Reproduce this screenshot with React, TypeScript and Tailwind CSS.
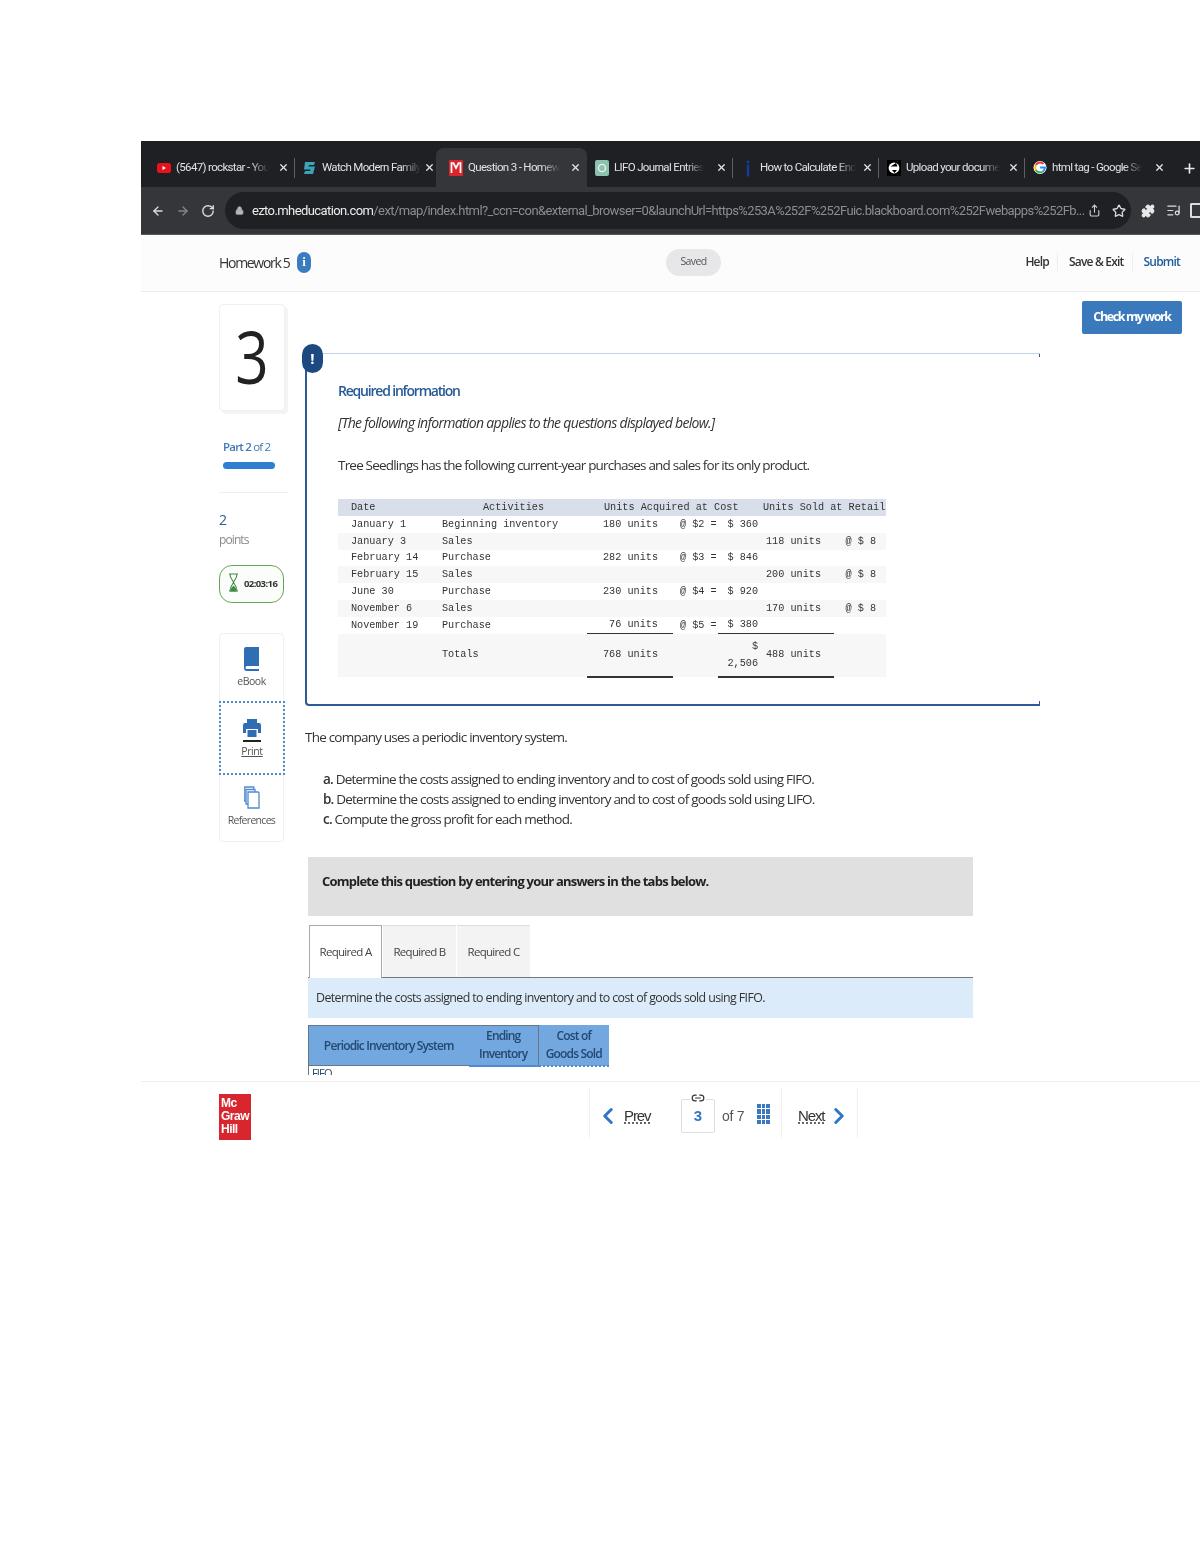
import React from "react";
import { ArrowLeft, ArrowRight, RotateCw, Lock, Share, Star, Puzzle, ListMusic, Link2, ChevronLeft, ChevronRight, X, Plus } from "lucide-react";

const tabs = [
  { t: "(5647) rockstar - You", i: "yt" },
  { t: "Watch Modern Family", i: "s" },
  { t: "Question 3 - Homew", i: "m", active: true },
  { t: "LIFO Journal Entries", i: "gpt" },
  { t: "How to Calculate End", i: "ib" },
  { t: "Upload your docume", i: "up" },
  { t: "html tag - Google Se", i: "g" },
];

function Fav({ k }: { k: string }) {
  if (k === "yt") return <svg width="14" height="14" viewBox="0 0 14 14"><rect y="2" width="14" height="10" rx="2.5" fill="#e8121a" /><path d="M5.5 5v4l3.5-2z" fill="#fff" /></svg>;
  if (k === "s") return <svg width="14" height="14" viewBox="0 0 14 14"><path d="M2 1h10l-1 3H6l-.5 1.5H12L10 13H1l1-3h5l.5-1.5H1z" fill="#3aa5b8" /></svg>;
  if (k === "m") return <svg width="14" height="16" viewBox="0 0 14 16"><rect width="14" height="16" fill="#d9262c" /><path d="M2.5 13V3h2l2.5 5 2.5-5h2v10" fill="none" stroke="#fff" strokeWidth="1.7" /></svg>;
  if (k === "gpt") return <svg width="14" height="16" viewBox="0 0 14 16"><rect width="14" height="16" rx="2" fill="#8cc2ae" /><circle cx="7" cy="8" r="3.6" fill="none" stroke="#e8f5f0" strokeWidth="1.4" /></svg>;
  if (k === "ib") return <svg width="14" height="18" viewBox="0 0 14 18"><circle cx="7" cy="3" r="1.4" fill="#123c9c" /><rect x="5.8" y="5.5" width="2.4" height="12" fill="#123c9c" /></svg>;
  if (k === "up") return <svg width="14" height="16" viewBox="0 0 14 16"><rect width="14" height="16" fill="#000" /><circle cx="7" cy="8" r="5.4" fill="#fff" /><path d="M3.5 6.5h7L9 3zM5 10h5l-2.5 3z" fill="#000" /></svg>;
  return <svg width="15" height="15" viewBox="0 0 15 15"><circle cx="7.5" cy="7.5" r="7" fill="#fff" /><path d="M7.5 2.2a5.3 5.3 0 0 1 3.7 1.5" fill="none" stroke="#e33" strokeWidth="2" /><path d="M3 4.8a5.3 5.3 0 0 1 4.5-2.6" fill="none" stroke="#e33" strokeWidth="2" /><path d="M3 4.8a5.3 5.3 0 0 0 0 5.4" fill="none" stroke="#fb0" strokeWidth="2" /><path d="M3 10.2a5.3 5.3 0 0 0 7.5 1.6" fill="none" stroke="#3a5" strokeWidth="2" /><path d="M10.5 11.8a5.3 5.3 0 0 0 2.3-4.3H7.6" fill="none" stroke="#38f" strokeWidth="2" /></svg>;
}

function Tab({ t, i, active }: { t: string; i: string; active?: boolean }) {
  return (
    <div className={`relative flex items-center shrink-0 h-full ${active ? "bg-[#35363a] rounded-t-lg -ml-[5px] pl-[13px] w-[151px]" : "w-[146px] pl-2"}`}>
      <span className="w-[14px] flex justify-center shrink-0"><Fav k={i} /></span>
      <span className="ml-[5px] whitespace-nowrap text-[11.5px] tracking-[-0.66px] text-[#e0e1e3] [mask-image:linear-gradient(to_right,black_80%,transparent)]">{t}</span>
      <X className="absolute right-[6px] top-[14px] text-[#e4e5e7]" size={11} strokeWidth={2.8} />
    </div>
  );
}

function Chrome() {
  return (
    <div className="text-white font-['Roboto',sans-serif]">
      <div className="h-[46px] bg-[#1f2023] pt-[7px] pl-2 flex">
        <div className="flex h-[39px]">
          {tabs.map((x, idx) => (
            <React.Fragment key={x.t}>
              <Tab {...x} />
              {idx < 6 && idx !== 1 && idx !== 2 && <div className="w-0 relative"><div className="absolute -left-px top-[10px] h-[20px] w-px bg-[#5f6063]" /></div>}
            </React.Fragment>
          ))}
        </div>
        <Plus className="ml-[11px] mt-[13px] text-[#e8e9ea]" size={15} strokeWidth={2.6} />
      </div>
      <div className="h-[48px] bg-[#35363a] flex items-center pl-[10px] border-b border-[#55565a]">
        <ArrowLeft size={14} className="text-[#dcdde0]" strokeWidth={2.2} />
        <ArrowRight size={14} className="ml-[11px] text-[#85878b]" strokeWidth={2.2} />
        <RotateCw size={14} className="ml-[11px] text-[#dcdde0]" strokeWidth={2.4} />
        <div className="ml-[10px] w-[908px] h-[37px] rounded-full bg-[#1f2023] flex items-center pl-[10px]">
          <Lock size={9} className="text-[#b5b6b8]" fill="#b5b6b8" />
          <span className="ml-[8px] w-[830px] whitespace-nowrap text-[13px] tracking-[-0.59px] text-[#8b8d90]"><span className="text-[#eceded]">ezto.mheducation.com</span>/ext/map/index.html?_ccn=con&amp;external_browser=0&amp;launchUrl=https%253A%252F%252Fuic.blackboard.com%252Fwebapps%252Fb...</span>
          <Share size={13} className="ml-[6px] text-[#cfd0d2]" />
          <Star size={14} className="ml-[11px] text-[#dedfe0]" strokeWidth={2.2} />
        </div>
        <Puzzle size={14} className="ml-[10px] text-[#e8e9ea]" fill="#e8e9ea" />
        <ListMusic size={15} className="ml-[11px] text-[#dcdde0]" />
        <div className="ml-[9px] w-[10px] h-[15px] border-2 border-r-0 border-[#dcdde0] rounded-l-[2px]" />
      </div>
    </div>
  );
}

function Header() {
  return (
    <div className="h-[57px] pb-[2px] bg-[#fcfcfc] border-b border-[#ececec] flex items-center pl-[78px] pr-[20px] font-['Open_Sans',sans-serif]">
      <span className="text-[14px] tracking-[-1.3px] text-[#333] w-[77px] whitespace-nowrap">Homework 5</span>
      <span className="ml-px w-[14px] h-[21px] rounded-full bg-[#3b7bbf] flex items-center justify-center text-white text-[13px] font-bold font-['Liberation_Serif',serif]">i</span>
      <span className="ml-[355px] w-[55px] h-[27px] rounded-full bg-[#e7e6e8] flex items-center justify-center text-[10.5px] tracking-[-0.6px] text-[#555]">Saved</span>
      <span className="ml-auto text-[12px] font-semibold tracking-[-0.8px] text-[#333] pr-[8px] border-r border-[#eee]">Help</span>
      <span className="ml-[11px] text-[12px] font-semibold tracking-[-0.8px] text-[#333] pr-[8px] border-r border-[#eee]">Save &amp; Exit</span>
      <span className="ml-[11px] text-[12px] font-semibold tracking-[-0.8px] text-[#1f5a9c]">Submit</span>
    </div>
  );
}

function Sidebar() {
  return (
    <div className="w-[70px] shrink-0 font-['Open_Sans',sans-serif]">
      <div className="relative w-[66px] h-[107px] mt-3 bg-white border border-[#f0f0f0] rounded-[4px] shadow-[3px_3px_0_#f4f4f4] flex items-center justify-center">
        <span className="-mt-[5px] text-[73px] leading-none text-[#222] scale-x-[0.8]">3</span>
      </div>
      <div className="mt-[29px] pl-[4px] text-[11.5px] leading-[14px] tracking-[-0.8px] text-[#3f78b8] font-semibold whitespace-nowrap">Part 2 <span className="font-normal">of 2</span></div>
      <div className="mt-[8px] ml-[4px] w-[52px] h-[7px] rounded-full bg-[#2f7fd0]" />
      <div className="mt-[23px] w-[69px] border-t border-[#efefef]" />
      <div className="mt-[18px] text-[14px] leading-[18px] text-[#2a5c99]">2</div>
      <div className="mt-[3px] text-[12px] leading-[16px] tracking-[-0.9px] text-[#8a8a8a]">points</div>
      <div className="mt-[17px] w-[65px] h-[38px] rounded-[13px] border border-[#6aa45a] flex items-center pl-[8px] bg-[#fbfdfa]">
        <svg width="11" height="19" viewBox="0 0 11 19" className="shrink-0 -mt-[3px]" fill="none" stroke="#3f8a45" strokeWidth="1.1"><path d="M1 1h9M1 18h9M2 1c0 5 3 6 3.5 8.500C5 11 2 13 2 18M9 1c0 5-3 6-3.500 8.500C6 11 9 13 9 18" /><path d="M3 18c0-3 2-4 2.500-4.500C6 14 8 15 8 18z" fill="#3f8a45" /></svg>
        <span className="ml-[5px] text-[9.5px] tracking-[-0.6px] font-bold text-[#333]">02:03:16</span>
      </div>
      <div className="mt-[30px] w-[65px] border border-[#f0f0f0] rounded-[4px]">
        <div className="h-[67px] flex flex-col items-center pt-[13px]">
          <svg width="16" height="24" viewBox="0 0 16 24"><path d="M2 0h13v19H3a1 1 0 0 0 0 3h12v2H3a3 3 0 0 1-3-3V2a2 2 0 0 1 2-2z" fill="#2f6eb5" /></svg>
          <span className="mt-[3px] text-[10.5px] leading-[14px] tracking-[-0.5px] text-[#555]">eBook</span>
        </div>
        <div className="-mx-[1px] w-[66px] h-[74px] border-2 border-dotted border-[#4f8bd0] flex flex-col items-center pt-[16px]">
          <svg width="18" height="24" viewBox="0 0 18 24"><path d="M4 0h10v4H4z" fill="#2f6eb5" /><path d="M0 6a2 2 0 0 1 2-2h14a2 2 0 0 1 2 2v8h-3v-4H3v4H0z" fill="#2f6eb5" /><path d="M4.500 11h9v7h-9z" fill="#2f6eb5" /><path d="M0 21h18v2H0z" fill="#222" /></svg>
          <span className="mt-[1px] text-[10.5px] leading-[14px] tracking-[-0.4px] text-[#555] underline">Print</span>
        </div>
        <div className="h-[66px] flex flex-col items-center pt-[11px]">
          <svg width="16" height="23" viewBox="0 0 16 23" fill="none" stroke="#4f8bd0" strokeWidth="1.3"><path d="M4 22V6h10a1 1 0 0 1 1 1v15z" /><path d="M4 18H2V3.500h9V6" /><path d="M2 15H.8V1h9v2" /></svg>
          <span className="mt-[4px] text-[10.5px] leading-[14px] tracking-[-0.7px] text-[#555]">References</span>
        </div>
      </div>
    </div>
  );
}

const cell = "align-middle whitespace-nowrap p-0";
const rows = [
  ["January 1", "Beginning inventory", "180 units", "@ $2 =", "$ 360", "", ""],
  ["January 3", "Sales", "", "", "", "118 units", "@ $ 8"],
  ["February 14", "Purchase", "282 units", "@ $3 =", "$ 846", "", ""],
  ["February 15", "Sales", "", "", "", "200 units", "@ $ 8"],
  ["June 30", "Purchase", "230 units", "@ $4 =", "$ 920", "", ""],
  ["November 6", "Sales", "", "", "", "170 units", "@ $ 8"],
  ["November 19", "Purchase", "76 units", "@ $5 =", "$ 380", "", ""],
];

function InfoTable() {
  return (
    <table className="mt-[24px] w-[548px] table-fixed border-collapse font-['Liberation_Mono',monospace] text-[10.2px] text-[#333]">
      <colgroup>
        <col className="w-[92px]" /><col className="w-[157px]" /><col className="w-[86px]" /><col className="w-[45px]" /><col className="w-[45px]" /><col className="w-[71px]" /><col className="w-[52px]" />
      </colgroup>
      <tbody>
        <tr className="h-[17px] bg-[#d9dfea]">
          <td className={`${cell} pl-[13px]`}>Date</td>
          <td className={`${cell} text-center pl-[10px]`}>Activities</td>
          <td colSpan={3} className={`${cell} pl-[17px]`}>Units Acquired at Cost</td>
          <td colSpan={2} className={`${cell} text-right pr-[3px]`}>Units Sold at Retail</td>
        </tr>
        {rows.map((r, i) => (
          <tr key={r[0]} className={`h-[16.8px] ${i % 2 ? "bg-[#f7f7f7]" : "bg-white"}`}>
            <td className={`${cell} pl-[13px]`}>{r[0]}</td>
            <td className={`${cell} pl-[12px]`}>{r[1]}</td>
            <td className={`${cell} text-right pr-[15px] ${i === 6 ? "border-b border-[#333]" : ""}`}>{r[2]}</td>
            <td className={`${cell} pl-[7px]`}>{r[3]}</td>
            <td className={`${cell} text-right pr-[5px] ${i === 6 ? "border-b border-[#333]" : ""}`}>{r[4]}</td>
            <td className={`${cell} text-right pr-[13px] ${i === 6 ? "border-b border-[#333]" : ""}`}>{r[5]}</td>
            <td className={`${cell} text-right pr-[10px]`}>{r[6]}</td>
          </tr>
        ))}
        <tr className="h-[43px] bg-[#f7f7f7]">
          <td className={cell} />
          <td className={`${cell} pl-[12px]`}>Totals</td>
          <td className={`${cell} text-right pr-[15px] border-b-2 border-[#333]`}>768 units</td>
          <td className={cell} />
          <td className={`${cell} text-right pr-[5px] border-b-2 border-[#333] leading-[17px]`}>$<br />2,506</td>
          <td className={`${cell} text-right pr-[13px] border-b-2 border-[#333]`}>488 units</td>
          <td className={cell} />
        </tr>
      </tbody>
    </table>
  );
}

function Panel() {
  return (
    <div className="relative mt-[61px] ml-[1px] w-[735px] h-[353px] border-t border-[#c3d2e6] border-l-2 border-l-[#2c5c96] border-b-2 border-b-[#2c5c96] rounded-bl-[4px] pl-[31px] pt-[27px]">
      <div className="absolute -left-[5px] -top-[10px] w-[21px] h-[29px] rounded-full bg-[#1c4a80] flex items-center justify-center text-white text-[15px] font-bold">!</div>
      <div className="absolute right-0 top-0 w-px h-[3px] bg-[#2c5c96]" />
      <div className="absolute right-0 bottom-0 w-px h-[3px] bg-[#2c5c96]" />
      <div className="text-[14px] leading-5 font-semibold tracking-[-1.2px] text-[#265a96]">Required information</div>
      <div className="mt-[12px] text-[14px] leading-5 italic tracking-[-0.68px] text-[#333]">[The following information applies to the questions displayed below.]</div>
      <div className="mt-[22px] text-[13.5px] leading-5 tracking-[-0.8px] text-[#333]">Tree Seedlings has the following current-year purchases and sales for its only product.</div>
      <InfoTable />
    </div>
  );
}

function Questions() {
  return (
    <div className="w-[735px] ml-[1px] text-[#333] text-[13.5px] tracking-[-0.78px]">
      <div className="mt-[21px] leading-5">The company uses a periodic inventory system.</div>
      <div className="mt-[22px] ml-[18px] leading-5">
        <div><b className="font-semibold">a.</b> Determine the costs assigned to ending inventory and to cost of goods sold using FIFO.</div>
        <div><b className="font-semibold">b.</b> Determine the costs assigned to ending inventory and to cost of goods sold using LIFO.</div>
        <div><b className="font-semibold">c.</b> Compute the gross profit for each method.</div>
      </div>
    </div>
  );
}

function Answers() {
  return (
    <div className="ml-[4px] w-[665px]">
      <div className="mt-[28px] h-[59px] bg-[#e0e0e0] pl-[14px] pt-[14px] text-[13px] leading-[20px] font-bold tracking-[-0.78px] text-[#222]">Complete this question by entering your answers in the tabs below.</div>
      <div className="mt-[9px] flex h-[53px] border-b border-[#777] pl-[1px] text-[11.5px] tracking-[-0.7px] text-[#444]">
        <div className="w-[73px] h-[53px] bg-white border border-[#aaa] border-b-0 flex items-center justify-center">Required A</div>
        <div className="ml-[1px] w-[73px] h-[52px] bg-[#f3f3f3] border-t border-[#ddd] flex items-center justify-center">Required B</div>
        <div className="ml-[1px] w-[73px] h-[52px] bg-[#f3f3f3] border-t border-[#ddd] flex items-center justify-center">Required C</div>
      </div>
      <div className="h-[40px] bg-[#dcebf9] pl-[8px] flex items-center text-[12.4px] tracking-[-0.6px] text-[#333]">Determine the costs assigned to ending inventory and to cost of goods sold using FIFO.</div>
      <table className="mt-[7px] w-[300px] table-fixed border-collapse text-[12px] font-semibold tracking-[-0.85px] text-[#24486f] leading-[18px]">
        <colgroup><col className="w-[160px]" /><col className="w-[70px]" /><col className="w-[70px]" /></colgroup>
        <thead>
          <tr className="h-[40px] bg-[#72a7e0]">
            <th className="font-semibold border-l border-t border-[#667788]">Periodic Inventory System</th>
            <th className="font-semibold border-t border-r border-[#667788]">Ending<br />Inventory</th>
            <th className="font-semibold border-t border-[#72a7e0]">Cost of<br />Goods Sold</th>
          </tr>
        </thead>
        <tbody>
          <tr>
            <td className="border-l border-t border-[#667788] pl-[3px] font-normal text-[11px] leading-[14px] align-top">FIFO</td>
            <td className="border-t-2 border-[#4f8bd0]" />
            <td className="border-t-2 border-dotted border-[#4f8bd0]" />
          </tr>
        </tbody>
      </table>
    </div>
  );
}

function Main() {
  return (
    <div className="h-[783px] overflow-hidden flex pl-[78px] bg-white">
      <Sidebar />
      <div className="ml-[15px] w-[737px] shrink-0 font-['Open_Sans',sans-serif]">
        <Panel />
        <Questions />
        <Answers />
      </div>
      <div className="ml-[41px] mt-[9px] w-[100px] h-[33px] rounded-[2px] bg-[#3b79bd] flex items-center justify-center text-white text-[12.5px] font-bold tracking-[-1.4px] font-['Open_Sans',sans-serif] shrink-0">Check my work</div>
    </div>
  );
}

function Footer() {
  return (
    <div className="mt-[6px] h-[59px] border-t border-[#efefef] flex pl-[78px] bg-white font-['Liberation_Sans',sans-serif]">
      <div className="mt-[12px] w-[32px] h-[46px] bg-[#d7262d] text-white text-[12px] leading-[13px] font-bold pl-[2px] pt-[3px] tracking-[-0.5px]">Mc<br />Graw<br />Hill</div>
      <div className="ml-[338px] h-[50px] mt-[6px] pt-[6px] w-[269px] flex items-center border-x border-[#f1f1f1] relative">
        <ChevronLeft size={26} strokeWidth={2.8} className="ml-[5px] shrink-0 text-[#2f76c5]" />
        <span className="ml-[3px] w-[27px] text-[15px] tracking-[-1.1px] text-[#333] underline decoration-dotted underline-offset-2 whitespace-nowrap">Prev</span>
        <div className="relative ml-[30px] w-[34px] h-[34px] shrink-0 rounded-[2px] border border-[#ddd] flex items-center justify-center text-[15px] font-bold text-[#2f76c5]">
          3
          <span className="absolute -top-[9px] left-[8px] bg-white px-[1px]"><Link2 size={14} className="text-[#333]" /></span>
        </div>
        <span className="ml-[7px] w-[22px] whitespace-nowrap text-[14px] tracking-[-0.3px] text-[#555]">of 7</span>
        <div className="ml-[13px] -mt-[4px] grid grid-cols-3 grid-rows-4 gap-px w-[13px] h-[20px] shrink-0">
          {Array.from({ length: 12 }).map((_, i) => <span key={i} className="bg-[#3a78c2]" />)}
        </div>
        <div className="absolute right-[75px] top-0 h-[50px] w-px bg-[#f1f1f1]" />
        <span className="ml-[28px] w-[26px] text-[15px] tracking-[-1.1px] text-[#333] underline decoration-dotted underline-offset-2 whitespace-nowrap">Next</span>
        <ChevronRight size={26} strokeWidth={2.8} className="ml-[2px] shrink-0 text-[#2f76c5]" />
      </div>
    </div>
  );
}

export default function App() {
  return (
    <div className="w-[1200px] h-[1553px] bg-white pt-[141px] pl-[141px] overflow-hidden blur-[0.5px]">
      <div className="w-[1059px]">
        <Chrome />
        <Header />
        <Main />
        <Footer />
      </div>
    </div>
  );
}
